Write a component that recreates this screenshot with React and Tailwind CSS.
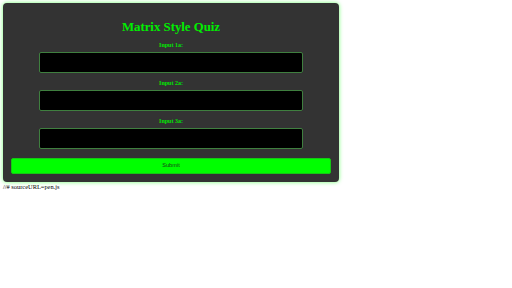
export default function App() {
  const inputs = ["Input 1a:", "Input 2a:", "Input 3a:"];
  return (
    <div className="w-[512px] h-[288px] bg-white p-[3px]" style={{ fontFamily: '"Liberation Serif", serif' }}>
      <div className="w-[336px] bg-[#333333] rounded-[4px] p-[8px] shadow-[0_0_4px_rgba(0,255,0,0.55)]">
        <h1 className="text-center font-bold text-[12.8px] leading-[14.7px] text-[#00ee00] mt-[8.6px] mb-[8.2px]">
          Matrix Style Quiz
        </h1>
        {inputs.map((label, i) => (
          <div key={label} className={i < 2 ? "mb-[7.8px]" : "mb-[9px]"}>
            <div className="text-center font-bold text-[6px] leading-[6.9px] text-[#00e600] mb-[2.3px]">
              {label}
            </div>
            <div className="w-[264px] h-[21px] mx-auto bg-black border border-[#3f7f3f] rounded-[2px]" />
          </div>
        ))}
        <div
          className="w-full h-[16px] bg-[#00ff00] rounded-[2px] border border-[#14c814] flex items-center justify-center text-[5.6px] text-[#1a3a1a]"
          style={{ fontFamily: '"Liberation Sans", sans-serif' }}
        >
          Submit
        </div>
      </div>
      <div className="text-[6.4px] leading-[7.4px] text-black mt-[1px]">//# sourceURL=pen.js</div>
    </div>
  );
}
